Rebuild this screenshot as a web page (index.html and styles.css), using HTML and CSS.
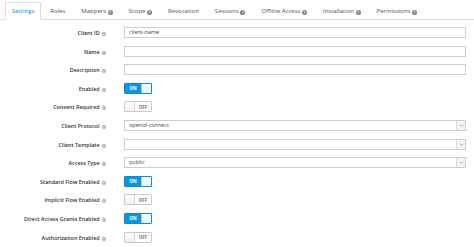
FILE: index.html
```html
<!DOCTYPE html>
<html>
<head>
<meta charset="utf-8">
<link rel="stylesheet" href="styles.css">
</head>
<body>
<ul class="tabs">
  <li class="tab active">Settings</li>
  <li class="tab">Roles</li>
  <li class="tab">Mappers <span class="hi">?</span></li>
  <li class="tab">Scope <span class="hi">?</span></li>
  <li class="tab">Revocation</li>
  <li class="tab">Sessions <span class="hi">?</span></li>
  <li class="tab">Offline Access <span class="hi">?</span></li>
  <li class="tab">Installation <span class="hi">?</span></li>
  <li class="tab">Permissions <span class="hi">?</span></li>
</ul>
<form class="form">
  <div class="row"><label class="lbl">Client ID <span class="q">?</span></label><div class="input">client-name</div></div>
  <div class="row"><label class="lbl">Name <span class="q">?</span></label><div class="input"></div></div>
  <div class="row"><label class="lbl">Description <span class="q">?</span></label><div class="input"></div></div>
  <div class="row"><label class="lbl">Enabled <span class="q">?</span></label><div class="sw on"><span class="st">ON</span><span class="knob"></span></div></div>
  <div class="row"><label class="lbl">Consent Required <span class="q">?</span></label><div class="sw off"><span class="knob"></span><span class="st">OFF</span></div></div>
  <div class="row"><label class="lbl">Client Protocol <span class="q">?</span></label><div class="input select"><span class="val">openid-connect</span><span class="arrow"><svg viewBox="0 0 8 8" width="5" height="5"><path d="M1.5 2.8 L4 5.3 L6.5 2.8" fill="none" stroke="#777" stroke-width="1"/></svg></span></div></div>
  <div class="row"><label class="lbl">Client Template <span class="q">?</span></label><div class="input select"><span class="val"></span><span class="arrow"><svg viewBox="0 0 8 8" width="5" height="5"><path d="M1.5 2.8 L4 5.3 L6.5 2.8" fill="none" stroke="#777" stroke-width="1"/></svg></span></div></div>
  <div class="row"><label class="lbl">Access Type <span class="q">?</span></label><div class="input select"><span class="val">public</span><span class="arrow"><svg viewBox="0 0 8 8" width="5" height="5"><path d="M1.5 2.8 L4 5.3 L6.5 2.8" fill="none" stroke="#777" stroke-width="1"/></svg></span></div></div>
  <div class="row"><label class="lbl">Standard Flow Enabled <span class="q">?</span></label><div class="sw on"><span class="st">ON</span><span class="knob"></span></div></div>
  <div class="row"><label class="lbl">Implicit Flow Enabled <span class="q">?</span></label><div class="sw off"><span class="knob"></span><span class="st">OFF</span></div></div>
  <div class="row"><label class="lbl">Direct Access Grants Enabled <span class="q">?</span></label><div class="sw on"><span class="st">ON</span><span class="knob"></span></div></div>
  <div class="row"><label class="lbl">Authorization Enabled <span class="q">?</span></label><div class="sw off"><span class="knob"></span><span class="st">OFF</span></div></div>
</form>
</body>
</html>
```
FILE: styles.css
```css
* { box-sizing: border-box; }
body {
  margin: 0;
  background: #fff;
  font-family: "Open Sans", "Liberation Sans", sans-serif;
  font-size: 6px;
  color: #363636;
}
.tabs {
  list-style: none;
  margin: 0;
  padding: 2px 0 0 5px;
  display: flex;
  border-bottom: 1px solid #ddd;
  height: 20px;
}
.tab {
  padding: 0 6px;
  margin-right: 2px;
  height: 18px;
  line-height: 16px;
  font-size: 6px;
  color: #4d5258;
  border: 1px solid transparent;
  white-space: nowrap;
}
.tab.active {
  color: #0088ce;
  border-color: #ddd;
  border-bottom-color: #fff;
  background: #fff;
}
.hi {
  display: inline-block;
  width: 5px;
  height: 5px;
  border-radius: 50%;
  background: #7a7e83;
  color: #fff;
  font-size: 3.8px;
  line-height: 5px;
  text-align: center;
  font-weight: 700;
  vertical-align: -0.5px;
}
.form {
  padding: 7px 8px 0 0;
  display: flex;
  flex-direction: column;
  gap: 7.6px;
}
.row {
  display: flex;
  align-items: center;
  height: 11px;
}
.lbl {
  width: 106px;
  text-align: right;
  font-weight: 600;
  font-size: 5.4px;
  white-space: nowrap;
  color: #333;
  flex-shrink: 0;
  margin-right: 18px;
  padding-top: 1px;
}
.q {
  display: inline-block;
  width: 4px;
  height: 4px;
  border-radius: 50%;
  border: 0.7px solid #9a9c9e;
  color: #9a9c9e;
  font-size: 3px;
  line-height: 2.8px;
  text-align: center;
  font-weight: 700;
  vertical-align: 0px;
  margin-left: 1px;
}
.input {
  flex: 1;
  height: 11px;
  border: 1px solid #cdcdcd;
  padding: 0 4px;
  font-size: 5.5px;
  line-height: 9px;
  color: #444;
  background: #fff;
}
.select {
  display: flex;
  align-items: stretch;
  padding-right: 0;
}
.select .val { flex: 1; }
.arrow {
  width: 9px;
  border-left: 1px solid #d8d8d8;
  display: flex;
  align-items: center;
  justify-content: center;
  background: #f4f4f4;
}
.sw {
  display: flex;
  width: 28px;
  height: 11px;
  border: 1px solid #c9c9c9;
  border-radius: 1px;
  font-size: 4.5px;
  font-weight: 700;
  overflow: hidden;
}
.sw .knob {
  width: 10px;
  background: linear-gradient(#fff, #f0f0f0);
}
.sw .st {
  flex: 1;
  display: flex;
  align-items: center;
  justify-content: center;
}
.sw.on { border-color: #0a8ad0; }
.sw.on .st {
  background: #0d96d8;
  color: #fff;
}
.sw.on .knob { border-left: 1px solid #c9c9c9; }
.sw.off .knob { border-right: 1px solid #d0d0d0; }
.sw.off .st { color: #777; background: #fff; }
```
